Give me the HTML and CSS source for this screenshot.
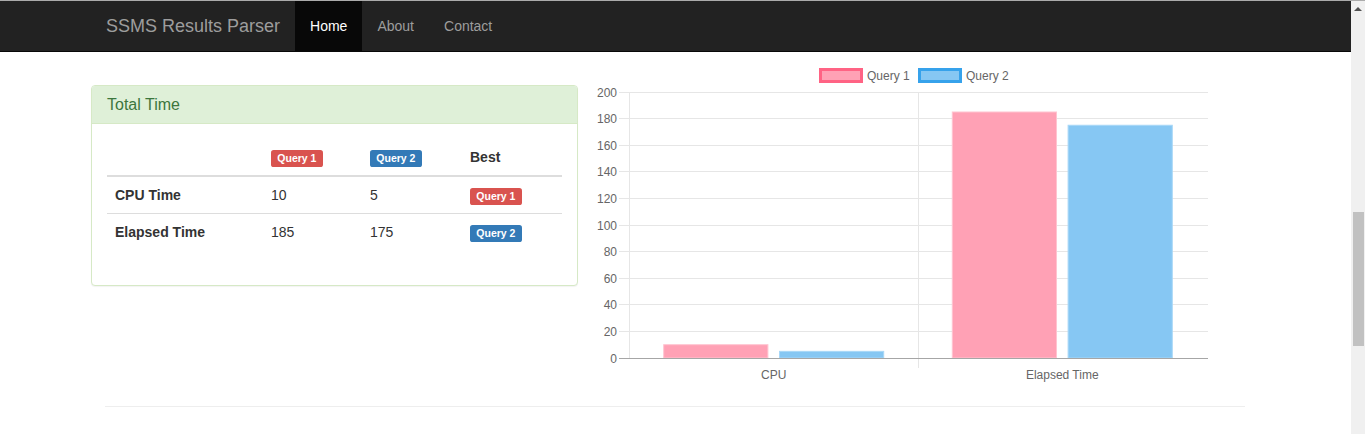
FILE: index.html
```html
<!DOCTYPE html>
<html lang="en">
<head>
<meta charset="utf-8">
<title>SSMS Results Parser</title>
<link rel="stylesheet" href="styles.css">
</head>
<body>
<div class="topline"></div>
<div class="screen">
  <div class="page">
    <nav class="navbar">
      <a class="brand" href="#">SSMS Results Parser</a>
      <ul class="nav">
        <li class="active"><a href="#">Home</a></li>
        <li><a href="#">About</a></li>
        <li><a href="#">Contact</a></li>
      </ul>
    </nav>
    <div class="container">
      <div class="row">
        <div class="col-left">
          <div class="panel">
            <div class="panel-heading"><h3 class="panel-title">Total Time</h3></div>
            <div class="panel-body">
              <table class="table">
                <thead>
                  <tr>
                    <th class="c1"></th>
                    <th class="c2"><span class="label label-danger">Query 1</span></th>
                    <th class="c3"><span class="label label-primary">Query 2</span></th>
                    <th class="c4">Best</th>
                  </tr>
                </thead>
                <tbody>
                  <tr>
                    <th>CPU Time</th>
                    <td>10</td>
                    <td>5</td>
                    <td><span class="label label-danger">Query 1</span></td>
                  </tr>
                  <tr>
                    <th>Elapsed Time</th>
                    <td>185</td>
                    <td>175</td>
                    <td><span class="label label-primary">Query 2</span></td>
                  </tr>
                </tbody>
              </table>
            </div>
          </div>
        </div>
        <div class="col-right">
          <svg class="chart" width="640" height="340" viewBox="0 0 640 340" xmlns="http://www.w3.org/2000/svg">
            <!-- legend -->
            <rect x="230.5" y="17.5" width="41" height="12" fill="#ffa1b5" stroke="#ff6384" stroke-width="3"/>
            <text x="277" y="27.5" class="lbl">Query 1</text>
            <rect x="329.5" y="17.5" width="41" height="12" fill="#86c7f3" stroke="#36a2eb" stroke-width="3"/>
            <text x="376" y="27.5" class="lbl">Query 2</text>
            <!-- horizontal gridlines -->
            <g stroke="#e6e6e6" stroke-width="1">
              <line x1="29" y1="40.5" x2="618" y2="40.5"/>
              <line x1="29" y1="66.5" x2="618" y2="66.5"/>
              <line x1="29" y1="93.5" x2="618" y2="93.5"/>
              <line x1="29" y1="119.5" x2="618" y2="119.5"/>
              <line x1="29" y1="146.5" x2="618" y2="146.5"/>
              <line x1="29" y1="173.5" x2="618" y2="173.5"/>
              <line x1="29" y1="199.5" x2="618" y2="199.5"/>
              <line x1="29" y1="226.5" x2="618" y2="226.5"/>
              <line x1="29" y1="252.5" x2="618" y2="252.5"/>
              <line x1="29" y1="279.5" x2="618" y2="279.5"/>
              <line x1="39.5" y1="40" x2="39.5" y2="306"/>
              <line x1="328.5" y1="40" x2="328.5" y2="316"/>
            </g>
            <!-- bars -->
            <rect x="73.7" y="292.7" width="104.2" height="13.3" fill="#ffa1b5" stroke="#ffc4d0" stroke-width="1"/>
            <rect x="189.5" y="299.35" width="104.2" height="6.65" fill="#86c7f3" stroke="#a8d7f7" stroke-width="1"/>
            <rect x="362.3" y="60" width="104.2" height="246" fill="#ffa1b5" stroke="#ffc4d0" stroke-width="1"/>
            <rect x="478.1" y="73.25" width="104.2" height="232.75" fill="#86c7f3" stroke="#a8d7f7" stroke-width="1"/>
            <!-- x axis -->
            <line x1="29" y1="306.5" x2="618" y2="306.5" stroke="#a6a6a6" stroke-width="1"/>
            <!-- y labels -->
            <g class="lbl" text-anchor="end">
              <text x="27" y="44.5">200</text>
              <text x="27" y="71">180</text>
              <text x="27" y="97.5">160</text>
              <text x="27" y="124">140</text>
              <text x="27" y="150.5">120</text>
              <text x="27" y="177.5">100</text>
              <text x="27" y="204">80</text>
              <text x="27" y="230.5">60</text>
              <text x="27" y="257">40</text>
              <text x="27" y="283.5">20</text>
              <text x="27" y="310.5">0</text>
            </g>
            <g class="lbl" text-anchor="middle">
              <text x="183.75" y="326.5">CPU</text>
              <text x="472.25" y="326.5">Elapsed Time</text>
            </g>
          </svg>
        </div>
      </div>
      <hr class="divider">
    </div>
  </div>
  <div class="scrollbar">
    <div class="arrow"></div>
    <div class="thumb"></div>
  </div>
</div>
</body>
</html>
```
FILE: styles.css
```css
html, body {
  margin: 0;
  padding: 0;
  height: 434px;
  overflow: hidden;
  background: #fff;
  font-family: "Liberation Sans", Arial, sans-serif;
  font-size: 14px;
  line-height: 20px;
  color: #333;
}

.topline {
  height: 1px;
  background: #ababab;
}

.screen {
  display: flex;
  height: 433px;
}

.page {
  width: 1351px;
  flex: none;
}

.navbar {
  display: flex;
  height: 50px;
  background: #222;
  border-bottom: 1px solid #080808;
  padding-left: 91px;
}

.brand {
  display: block;
  padding: 15px 15px 15px 15px;
  font-size: 18px;
  line-height: 20px;
  color: #9d9d9d;
  text-decoration: none;
}

.nav {
  display: flex;
  list-style: none;
  margin: 0;
  padding: 0;
}

.nav a {
  display: block;
  padding: 15px;
  line-height: 20px;
  color: #9d9d9d;
  text-decoration: none;
}

.nav .active a {
  background: #080808;
  color: #fff;
}

.container {
  margin-left: 90px;
  width: 1170px;
}

.row {
  display: flex;
}

.col-left {
  width: 488px;
  box-sizing: border-box;
  padding-left: 1px;
  flex: none;
}

.panel {
  margin-top: 33px;
  width: 487px;
  box-sizing: border-box;
  border: 1px solid #d6e9c6;
  border-radius: 4px;
  box-shadow: 0 1px 1px rgba(0, 0, 0, 0.05);
  background: #fff;
}

.panel-heading {
  padding: 10px 15px;
  background: #dff0d8;
  border-bottom: 1px solid #d6e9c6;
  border-radius: 3px 3px 0 0;
  color: #3c763d;
}

.panel-title {
  margin: 0;
  font-size: 16px;
  font-weight: normal;
  line-height: 17px;
}

.panel-body {
  padding: 15px;
}

.table {
  width: 455px;
  border-collapse: collapse;
  border-spacing: 0;
  margin-bottom: 20px;
}

.table th,
.table td {
  padding: 8px;
  text-align: left;
  line-height: 20px;
  vertical-align: top;
}

.table thead th {
  vertical-align: bottom;
  border-bottom: 2px solid #ddd;
  font-weight: bold;
}

.table tbody tr + tr th,
.table tbody tr + tr td {
  border-top: 1px solid #ddd;
}

.table .c1 { width: 140px; }
.table .c2 { width: 83px; }
.table .c3 { width: 84px; }
.table .c4 { width: 84px; }

.label {
  display: inline;
  padding: 0.2em 0.6em 0.3em;
  font-size: 10.5px;
  font-weight: bold;
  line-height: 1;
  color: #fff;
  border-radius: 0.25em;
  white-space: nowrap;
}

.label-danger { background: #d9534f; }
.label-primary { background: #337ab7; }

.col-right {
  padding-left: 12px;
}

.chart {
  display: block;
}

.lbl,
.lbl text {
  font-family: "Liberation Sans", Arial, sans-serif;
  font-size: 12px;
  fill: #666;
}

.divider {
  margin: 14px 15px 0;
  border: 0;
  border-top: 1px solid #eee;
  height: 0;
}

.scrollbar {
  width: 14px;
  flex: none;
  background: #f0f0f0;
}

.arrow {
  margin: 6px 0 0 3px;
  width: 0;
  height: 0;
  border-left: 4px solid transparent;
  border-right: 4px solid transparent;
  border-bottom: 4px solid #505050;
}

.thumb {
  margin: 201px 0 0 2px;
  width: 11px;
  height: 134px;
  background: #c1c1c1;
}
```
